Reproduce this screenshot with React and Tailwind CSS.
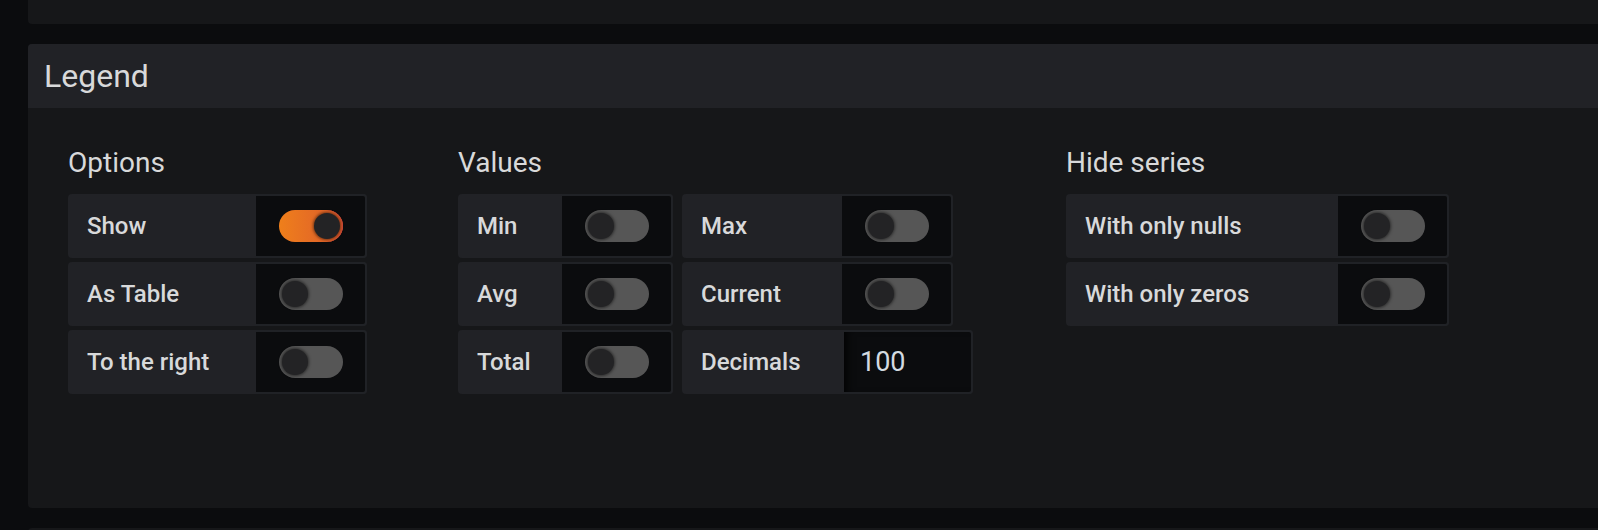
import { useState } from 'react'

const font = { fontFamily: 'Roboto, "Liberation Sans", sans-serif' }

function Toggle({ on }) {
  return (
    <div
      className={`flex h-[32px] w-[64px] items-center rounded-full px-[3px] ${
        on
          ? 'justify-end bg-gradient-to-r from-[#ef7f1a] to-[#dc5a2a] shadow-[inset_-1px_0_0_#d44a3a]'
          : 'justify-start bg-[#565656]'
      }`}
    >
      <div className="h-[26px] w-[26px] rounded-full bg-[#232325] shadow-[0_0_3px_1px_rgba(0,0,0,0.5)]" />
    </div>
  )
}

function SwitchRow({ label, labelW, on = false }) {
  return (
    <div className="flex h-16 rounded-[4px] bg-[#212226]">
      <div className="flex items-center pl-[19px] text-[24px] font-medium text-[#d8d9da]" style={{ width: labelW }}>
        {label}
      </div>
      <div className="flex w-[111px] items-center justify-center rounded-r-[4px] border-2 border-l-0 border-[#202226] bg-[#0b0c0e]">
        <Toggle on={on} />
      </div>
    </div>
  )
}

function InputRow({ label, value }) {
  return (
    <div className="flex h-16 rounded-[4px] bg-[#212226]">
      <div className="flex w-[162px] items-center pl-[19px] text-[24px] font-medium text-[#d8d9da]">{label}</div>
      <div className="flex w-[129px] items-center rounded-r-[4px] border-2 border-l-0 border-[#202226] bg-[#0b0c0e] pl-[16px] text-[27px] text-[#d4dae1] shadow-[inset_8px_0_10px_-6px_rgba(0,0,0,1)]">
        {value}
      </div>
    </div>
  )
}

function Heading({ children }) {
  return <div className="mb-[15px] h-8 text-[28px] leading-8 text-[#d8d9da]">{children}</div>
}

export default function App() {
  const [show] = useState(true)
  return (
    <div className="h-[530px] w-[1598px] overflow-hidden bg-[#0b0c0e]" style={font}>
      <div className="ml-[28px] h-[24px] rounded-bl-[4px] bg-[#161719]" />
      <div className="ml-[28px] mt-[20px] flex h-[464px] flex-col overflow-hidden rounded-l-[4px] bg-[#161719]">
        <div className="flex h-16 items-center bg-[#212226] pl-[16px] text-[32px] text-[#d8d9da]">Legend</div>
        <div className="flex pl-[40px] pt-[39px]">
          <div className="w-[299px]">
            <Heading>Options</Heading>
            <div className="flex flex-col gap-1">
              <SwitchRow label="Show" labelW={188} on={show} />
              <SwitchRow label="As Table" labelW={188} />
              <SwitchRow label="To the right" labelW={188} />
            </div>
          </div>
          <div className="ml-[91px]">
            <Heading>Values</Heading>
            <div className="flex flex-col gap-1">
              <div className="flex gap-[9px]">
                <SwitchRow label="Min" labelW={104} />
                <SwitchRow label="Max" labelW={160} />
              </div>
              <div className="flex gap-[9px]">
                <SwitchRow label="Avg" labelW={104} />
                <SwitchRow label="Current" labelW={160} />
              </div>
              <div className="flex gap-[9px]">
                <SwitchRow label="Total" labelW={104} />
                <InputRow label="Decimals" value="100" />
              </div>
            </div>
          </div>
          <div className="ml-[93px]">
            <Heading>Hide series</Heading>
            <div className="flex flex-col gap-1">
              <SwitchRow label="With only nulls" labelW={272} />
              <SwitchRow label="With only zeros" labelW={272} />
            </div>
          </div>
        </div>
      </div>
      <div className="ml-[28px] mt-[20px] h-[24px] rounded-tl-[4px] bg-[#161719]" />
    </div>
  )
}
